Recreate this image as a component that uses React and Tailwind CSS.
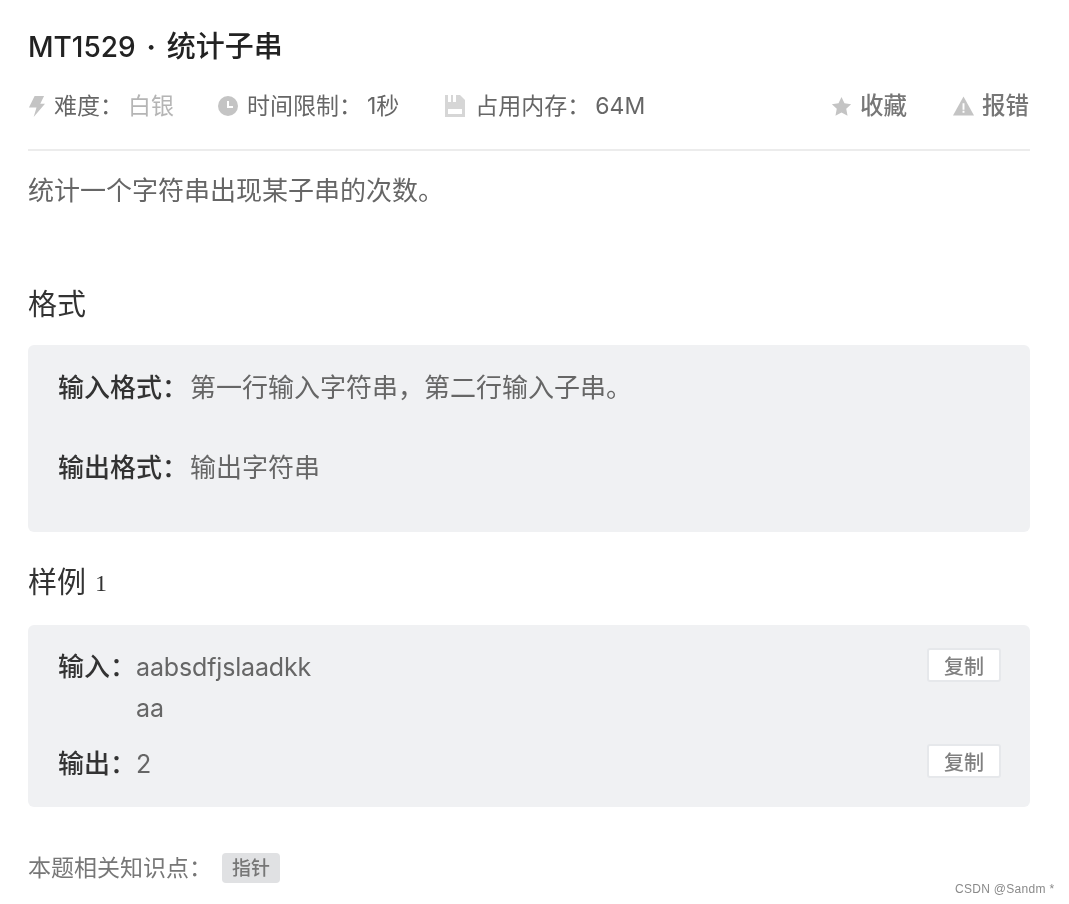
const sans = "font-['Inter','Noto_Sans_CJK_SC',sans-serif]";

function MetaItem({ icon, label, value, valueClass = 'text-[#666]' }) {
    return (
        <div className="flex items-center">
            {icon}
            <span className="text-[23px] text-[#666]">{label}</span>
            <span className={`text-[23px] ml-[5px] ${valueClass}`}>{value}</span>
        </div>
    );
}

function CopyButton() {
    return (
        <button className="w-[74px] h-[34px] pt-[3px] bg-white border-2 border-[#e6e8eb] rounded-[3px] text-[20px] font-medium text-[#808080] flex items-center justify-center">
            复制
        </button>
    );
}

export default function App() {
    return (
        <div className={`relative w-[1069px] h-[904px] bg-white overflow-hidden px-[28px] blur-[0.7px] ${sans}`}>
            <h1 className="flex items-center pt-[27px] h-[66px] text-[28px] leading-[40px] font-medium text-[#222]">
                <span>MT1529</span>
                <span className="w-[31px] text-center font-bold">·</span>
                <span className="text-[29px]">统计子串</span>
            </h1>

            <div className="flex items-center justify-between w-[1002px] h-[34px] mt-[23px]">
                <div className="flex items-center">
                    <MetaItem
                        icon={
                            <svg viewBox="0 0 18 22" className="w-[17px] h-[21px] mr-[9px]">
                                <path d="M7 0h10l-4 8h5L6 22l3-10H1z" fill="#c4c4c4" />
                            </svg>
                        }
                        label="难度："
                        value="白银"
                        valueClass="text-[#b5b5b5]"
                    />
                    <div className="w-[44px]" />
                    <MetaItem
                        icon={
                            <svg viewBox="0 0 20 20" className="w-[20px] h-[20px] mr-[9px]">
                                <circle cx="10" cy="10" r="10" fill="#c4c4c4" />
                                <path d="M10 5v6h5" fill="none" stroke="#fff" strokeWidth="2" />
                            </svg>
                        }
                        label="时间限制："
                        value="1秒"
                    />
                    <div className="w-[45px]" />
                    <MetaItem
                        icon={
                            <svg viewBox="0 0 21 22" className="w-[21px] h-[22px] mr-[10px]">
                                <path d="M1 0h15l5 5v17H1z" fill="#d6d6d6" />
                                <path d="M4 0h3v7H4zM9 0h3v7H9z" fill="#fff" />
                                <path d="M4 14h14v5H4z" fill="#fff" />
                            </svg>
                        }
                        label="占用内存："
                        value="64M"
                    />
                </div>
                <div className="flex items-center pr-[1px]">
                    <div className="flex items-center">
                        <svg viewBox="0 0 24 24" className="w-[21px] h-[21px] mr-[8px]">
                            <path d="M12 1l3.4 7.3 7.6 1-5.6 5.4 1.5 8L12 18.8l-6.9 3.9 1.5-8L1 9.3l7.6-1z" fill="#c4c4c4" />
                        </svg>
                        <span className="text-[23.5px] font-medium text-[#777]">收藏</span>
                    </div>
                    <div className="flex items-center ml-[46px]">
                        <svg viewBox="0 0 22 20" className="w-[21px] h-[20px] mr-[8px]">
                            <path d="M11 0l11 20H0z" fill="#c4c4c4" />
                            <path d="M10 7h2v7h-2zM10 15h2v2h-2z" fill="#fff" />
                        </svg>
                        <span className="text-[23.5px] font-medium text-[#777]">报错</span>
                    </div>
                </div>
            </div>

            <div className="w-[1002px] h-[2px] bg-[#ececec] mt-[26px]" />

            <p className="mt-[21px] text-[26px] leading-[38px] text-[#666]">统计一个字符串出现某子串的次数。</p>

            <h2 className="mt-[75px] text-[29px] leading-[40px] text-[#333]">格式</h2>

            <div className="w-[1002px] h-[187px] mt-[20px] bg-[#f0f1f3] rounded-[6px] pl-[30px] pt-[23px]">
                <p className="flex text-[26px] leading-[40px] text-[#666]">
                    <span className="w-[132px] font-medium text-[#333]">输入格式：</span>
                    <span>第一行输入字符串，第二行输入子串。</span>
                </p>
                <p className="flex mt-[40px] text-[26px] leading-[40px] text-[#666]">
                    <span className="w-[132px] font-medium text-[#333]">输出格式：</span>
                    <span>输出字符串</span>
                </p>
            </div>

            <h2 className="flex items-center mt-[31px] text-[29px] leading-[40px] text-[#333]">
                样例
                <span className="ml-[9px] text-[24px] font-['Liberation_Serif',serif]">1</span>
            </h2>

            <div className="relative w-[1002px] h-[182px] mt-[22px] bg-[#f0f1f3] rounded-[6px] pl-[30px] pt-[22px]">
                <div className="flex">
                    <span className="w-[78px] text-[26px] leading-[40px] font-medium text-[#333]">输入：</span>
                    <div className="text-[25px] leading-[41px] tracking-[-0.15px] text-[#666]">
                        <div>aabsdfjslaadkk</div>
                        <div>aa</div>
                    </div>
                </div>
                <div className="flex mt-[15px]">
                    <span className="w-[78px] text-[26px] leading-[40px] font-medium text-[#333]">输出：</span>
                    <span className="text-[25px] leading-[40px] text-[#666]">2</span>
                </div>
                <div className="absolute right-[29px] top-[23px]">
                    <CopyButton />
                </div>
                <div className="absolute right-[29px] top-[119px]">
                    <CopyButton />
                </div>
            </div>

            <div className="flex items-center mt-[44px]">
                <span className="text-[23px] text-[#777]">本题相关知识点：</span>
                <span className="ml-[10px] w-[58px] h-[30px] pt-[2px] bg-[#e0e1e3] rounded-[4px] text-[19px] font-medium text-[#777] flex items-center justify-center">
                    指针
                </span>
            </div>

            <div className="absolute left-[955px] top-[881px] text-[12px] leading-[16px] tracking-[0.3px] text-[#8a8a8a] font-['Liberation_Sans',sans-serif]">
                CSDN @Sandm *
            </div>
        </div>
    );
}
